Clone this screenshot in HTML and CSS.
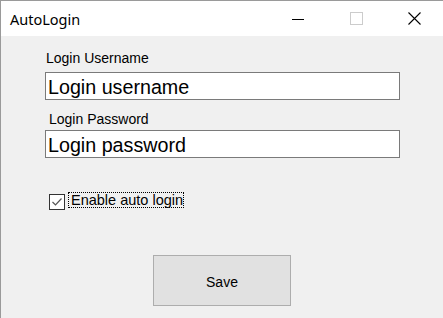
FILE: index.html
```html
<!DOCTYPE html>
<html>
<head>
<meta charset="utf-8">
<link rel="stylesheet" href="styles.css">
</head>
<body>
<div class="window">
  <div class="titlebar">
    <div class="title">AutoLogin</div>
    <div class="caption">
      <div class="cbtn"><svg width="12" height="12" viewBox="0 0 12 12"><line x1="0" y1="6.5" x2="12" y2="6.5" stroke="#000" stroke-width="1"/></svg></div>
      <div class="cbtn"><svg width="13" height="13" viewBox="0 0 13 13"><rect x="0.5" y="0.5" width="12" height="12" fill="none" stroke="#cccccc" stroke-width="1"/></svg></div>
      <div class="cbtn"><svg width="13" height="13" viewBox="0 0 13 13"><path d="M0.5 0.5 L12.5 12.5 M12.5 0.5 L0.5 12.5" stroke="#000" stroke-width="1.1" fill="none"/></svg></div>
    </div>
  </div>
  <div class="client">
    <div class="label first">Login Username</div>
    <div class="textbox">Login username</div>
    <div class="label second">Login Password</div>
    <div class="textbox tb2">Login password</div>
    <div class="checkrow">
      <div class="checkbox"><svg width="14" height="14" viewBox="0 0 14 14"><polyline points="2.5,7 5.5,10 11.5,3.5" fill="none" stroke="#555" stroke-width="1.2"/></svg></div>
      <div class="checklabel">Enable auto login</div>
    </div>
    <div class="btn">Save</div>
  </div>
</div>
</body>
</html>
```

FILE: styles.css
```css
html, body {
  margin: 0;
  padding: 0;
  width: 443px;
  height: 318px;
  overflow: hidden;
  background: #f0f0f0;
}
.window {
  width: 442px;
  height: 317px;
  border-top: 1px solid #9a9a9a;
  border-left: 1px solid #9a9a9a;
  background: #f0f0f0;
  font-family: "Liberation Sans", Arial, sans-serif;
  color: #000;
}
.titlebar {
  height: 35px;
  background: #fff;
  display: flex;
  align-items: center;
  justify-content: space-between;
}
.title {
  font-family: "Noto Sans", "Open Sans", sans-serif;
  font-size: 14.5px;
  padding-left: 9px;
  padding-top: 1px;
}
.caption {
  display: flex;
  height: 35px;
}
.cbtn {
  width: 58px;
  height: 35px;
  display: flex;
  align-items: center;
  justify-content: center;
}
.cbtn svg { display: block; }
.client {
  padding-left: 44px;
  padding-top: 14px;
}
.label {
  font-size: 14px;
  line-height: 16px;
  height: 16px;
}
.label.first { margin-left: 1px; }
.label.second { margin-left: 4px; margin-top: 11px; }
.textbox {
  box-sizing: border-box;
  width: 355px;
  height: 28px;
  margin-top: 6px;
  border: 1px solid #7a7a7a;
  background: #fff;
  font-size: 19.7px;
  line-height: 26px;
  padding-left: 2px;
  padding-top: 1px;
  white-space: nowrap;
}
.textbox.tb2 { margin-top: 3px; }
.checkrow {
  display: flex;
  align-items: flex-start;
  margin-top: 34px;
  margin-left: 4px;
}
.checkbox {
  box-sizing: border-box;
  width: 16px;
  height: 16px;
  margin-top: 2px;
  border: 1px solid #333;
  background: #fff;
  display: flex;
  align-items: center;
  justify-content: center;
}
.checkbox svg { display: block; }
.checklabel {
  margin-left: 3px;
  border: 1px dotted #000;
  font-size: 14.5px;
  line-height: 14px;
  padding: 0 0 0 2px;
  white-space: nowrap;
}
.btn {
  box-sizing: border-box;
  width: 138px;
  height: 51px;
  margin-top: 45px;
  margin-left: 108px;
  padding-top: 2px;
  border: 1px solid #adadad;
  background: #e1e1e1;
  font-size: 14px;
  display: flex;
  align-items: center;
  justify-content: center;
}
```
